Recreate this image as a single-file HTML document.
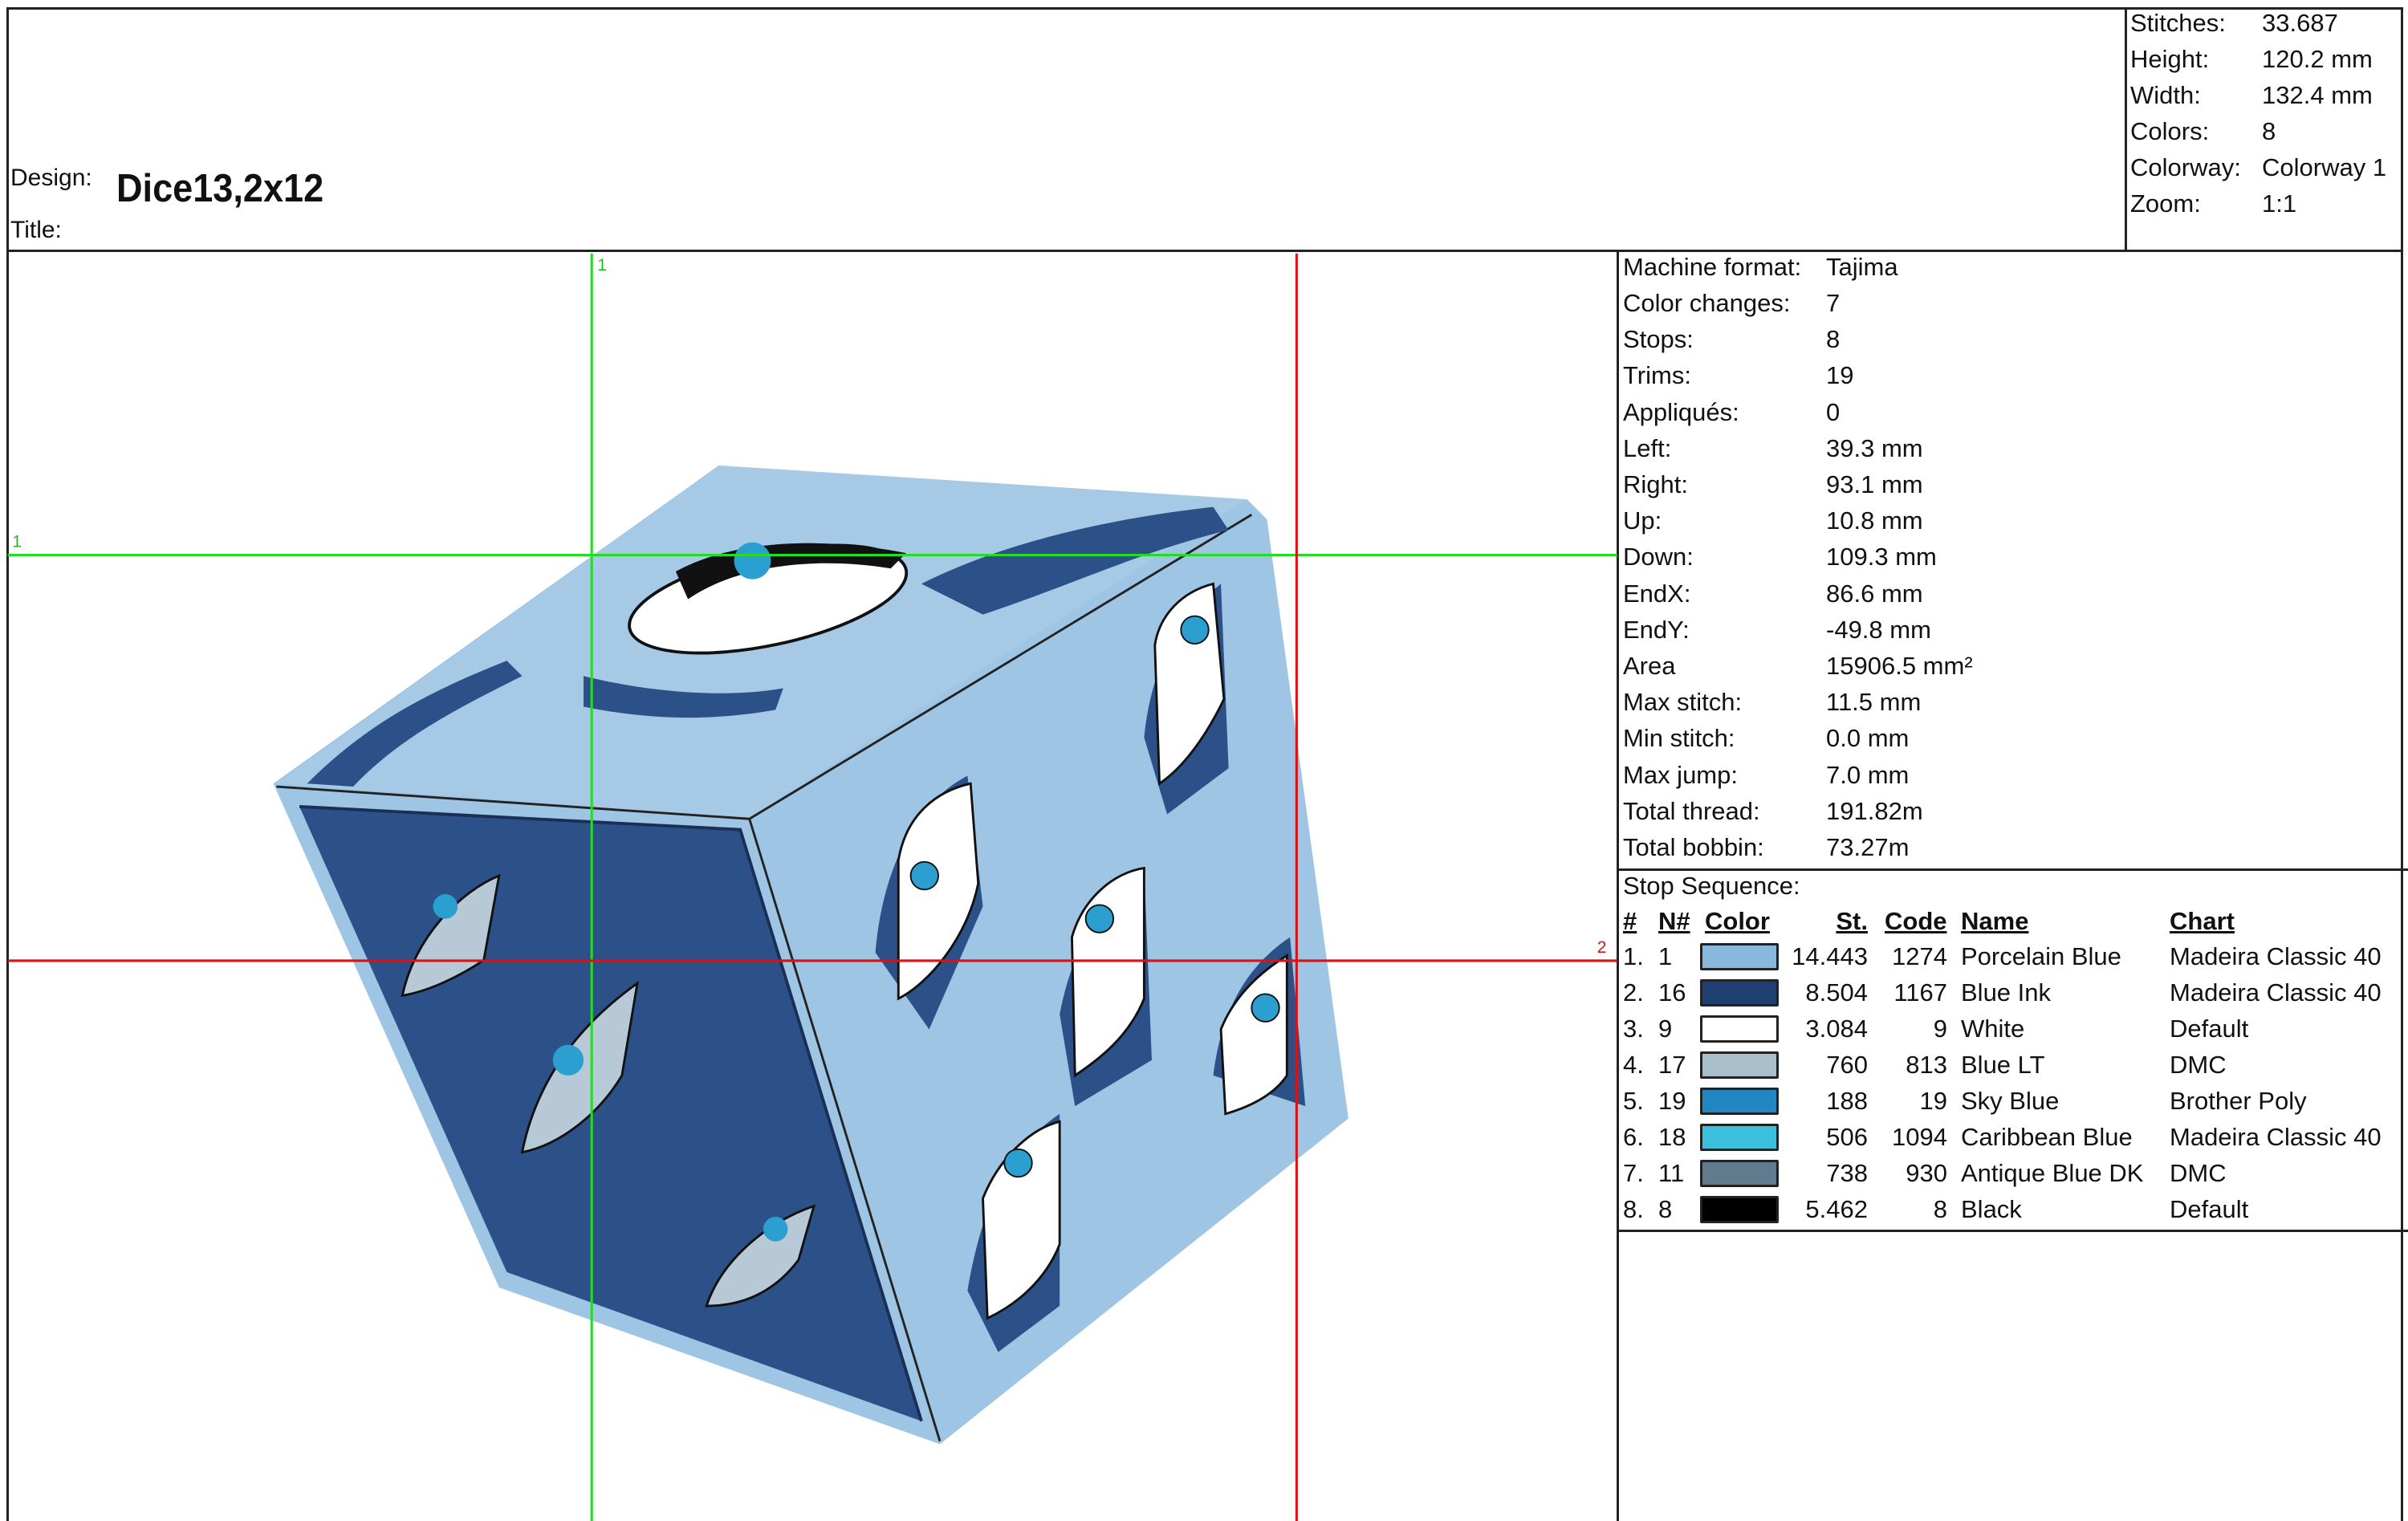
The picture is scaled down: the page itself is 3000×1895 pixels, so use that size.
<!DOCTYPE html>
<html><head><meta charset="utf-8"><style>
*{margin:0;padding:0;box-sizing:border-box}
body{width:3000px;height:1895px;background:#fff;position:relative;overflow:hidden;font-family:"Liberation Sans",sans-serif;color:#111}
.l{position:absolute;background:#222}
.t{position:absolute;font-size:31px;line-height:32px;white-space:nowrap}
.r{text-align:right}
.u{text-decoration:underline;font-weight:bold}
.sw{position:absolute;width:98px;height:34px;border:3px solid #222;border-radius:2px}
</style></head><body>
<div class="l" style="left:8px;top:9px;width:2986px;height:3px"></div>
<div class="l" style="left:8px;top:9px;width:3px;height:1886px"></div>
<div class="l" style="left:2991px;top:9px;width:3px;height:1886px"></div>
<div class="l" style="left:8px;top:311px;width:2986px;height:3px"></div>
<div class="l" style="left:2647px;top:9px;width:3px;height:304px"></div>
<div class="l" style="left:2014px;top:311px;width:3px;height:1584px"></div>
<div class="l" style="left:2014px;top:1082px;width:2980px;height:3px"></div>
<div class="l" style="left:2014px;top:1532px;width:2980px;height:3px"></div>

<div class="t" style="left:13px;top:206px;font-size:30px">Design:</div>
<div class="t" style="left:145px;top:210px;font-size:49px;line-height:50px;font-weight:bold;transform:scaleX(0.92);transform-origin:left">Dice13,2x12</div>
<div class="t" style="left:13px;top:271px;font-size:30px">Title:</div>

<div class="t" style="left:2654px;top:13px">Stitches:</div><div class="t" style="left:2818px;top:13px">33.687</div>
<div class="t" style="left:2654px;top:58px">Height:</div><div class="t" style="left:2818px;top:58px">120.2 mm</div>
<div class="t" style="left:2654px;top:103px">Width:</div><div class="t" style="left:2818px;top:103px">132.4 mm</div>
<div class="t" style="left:2654px;top:148px">Colors:</div><div class="t" style="left:2818px;top:148px">8</div>
<div class="t" style="left:2654px;top:193px">Colorway:</div><div class="t" style="left:2818px;top:193px">Colorway 1</div>
<div class="t" style="left:2654px;top:238px">Zoom:</div><div class="t" style="left:2818px;top:238px">1:1</div>

<div class="t" style="left:2022px;top:317px">Machine format:</div><div class="t" style="left:2275px;top:317px">Tajima</div>
<div class="t" style="left:2022px;top:362px">Color changes:</div><div class="t" style="left:2275px;top:362px">7</div>
<div class="t" style="left:2022px;top:407px">Stops:</div><div class="t" style="left:2275px;top:407px">8</div>
<div class="t" style="left:2022px;top:452px">Trims:</div><div class="t" style="left:2275px;top:452px">19</div>
<div class="t" style="left:2022px;top:498px">Appliqués:</div><div class="t" style="left:2275px;top:498px">0</div>
<div class="t" style="left:2022px;top:543px">Left:</div><div class="t" style="left:2275px;top:543px">39.3 mm</div>
<div class="t" style="left:2022px;top:588px">Right:</div><div class="t" style="left:2275px;top:588px">93.1 mm</div>
<div class="t" style="left:2022px;top:633px">Up:</div><div class="t" style="left:2275px;top:633px">10.8 mm</div>
<div class="t" style="left:2022px;top:678px">Down:</div><div class="t" style="left:2275px;top:678px">109.3 mm</div>
<div class="t" style="left:2022px;top:724px">EndX:</div><div class="t" style="left:2275px;top:724px">86.6 mm</div>
<div class="t" style="left:2022px;top:769px">EndY:</div><div class="t" style="left:2275px;top:769px">-49.8 mm</div>
<div class="t" style="left:2022px;top:814px">Area</div><div class="t" style="left:2275px;top:814px">15906.5 mm²</div>
<div class="t" style="left:2022px;top:859px">Max stitch:</div><div class="t" style="left:2275px;top:859px">11.5 mm</div>
<div class="t" style="left:2022px;top:904px">Min stitch:</div><div class="t" style="left:2275px;top:904px">0.0 mm</div>
<div class="t" style="left:2022px;top:950px">Max jump:</div><div class="t" style="left:2275px;top:950px">7.0 mm</div>
<div class="t" style="left:2022px;top:995px">Total thread:</div><div class="t" style="left:2275px;top:995px">191.82m</div>
<div class="t" style="left:2022px;top:1040px">Total bobbin:</div><div class="t" style="left:2275px;top:1040px">73.27m</div>

<div class="t" style="left:2022px;top:1088px">Stop Sequence:</div>
<div class="t u" style="left:2022px;top:1132px">#</div>
<div class="t u" style="left:2066px;top:1132px">N#</div>
<div class="t u" style="left:2124px;top:1132px">Color</div>
<div class="t u r" style="left:2227px;width:100px;top:1132px">St.</div>
<div class="t u" style="left:2348px;top:1132px">Code</div>
<div class="t u" style="left:2443px;top:1132px">Name</div>
<div class="t u" style="left:2703px;top:1132px">Chart</div>

<div id="rows"></div>
<script>
var d=[["1.","1","#88b8dc","14.443","1274","Porcelain Blue","Madeira Classic 40"],
["2.","16","#1f3f72","8.504","1167","Blue Ink","Madeira Classic 40"],
["3.","9","#ffffff","3.084","9","White","Default"],
["4.","17","#a9bfcc","760","813","Blue LT","DMC"],
["5.","19","#2286c4","188","19","Sky Blue","Brother Poly"],
["6.","18","#3cbfdc","506","1094","Caribbean Blue","Madeira Classic 40"],
["7.","11","#627a8e","738","930","Antique Blue DK","DMC"],
["8.","8","#000000","5.462","8","Black","Default"]];
var h="";
d.forEach(function(r,i){var y=1176+45*i;
h+='<div class="t" style="left:2022px;top:'+y+'px">'+r[0]+'</div>';
h+='<div class="t" style="left:2066px;top:'+y+'px">'+r[1]+'</div>';
h+='<div class="sw" style="left:2118px;top:'+(y-1)+'px;background:'+r[2]+'"></div>';
h+='<div class="t r" style="left:2177px;width:150px;top:'+y+'px">'+r[3]+'</div>';
h+='<div class="t r" style="left:2326px;width:100px;top:'+y+'px">'+r[4]+'</div>';
h+='<div class="t" style="left:2443px;top:'+y+'px">'+r[5]+'</div>';
h+='<div class="t" style="left:2703px;top:'+y+'px">'+r[6]+'</div>';});
document.getElementById("rows").innerHTML=h;
</script>

<svg style="position:absolute;left:0;top:0" width="3000" height="1895" viewBox="0 0 1568 990" preserveAspectRatio="none">
<polygon points="178,510 468,303 812,325 825,338 878,728 612,940 325,838" fill="#9fc5e4"/>
<polygon points="195,525 482,540 600,925 330,828" fill="#2c5088"/>
<polygon points="468,303 812,325 488,532 180,510" fill="#a6c9e6"/>
<path d="M180,512 L488,533 L815,335 M488,533 L612,938" stroke="#222" stroke-width="1.5" fill="none"/>
<path d="M195,525 L482,540 L600,925" stroke="#1a2f55" stroke-width="2" fill="none"/>
<path d="M200,510 C240,470 280,450 330,430 L340,440 C300,460 260,480 230,512 Z" fill="#2c5088"/>
<path d="M600,380 C640,360 700,340 790,330 L800,345 C740,360 700,380 640,400 Z" fill="#2c5088"/>
<path d="M380,440 C420,450 470,455 510,448 L505,462 C460,470 420,468 380,460 Z" fill="#2c5088"/>
<ellipse cx="500" cy="390" rx="92" ry="30" transform="rotate(-12 500 390)" fill="#fff" stroke="#111" stroke-width="2"/>
<path d="M440,372 C480,350 540,350 590,360 L580,370 C530,362 480,368 448,390 Z" fill="#111"/>
<circle cx="490" cy="365" r="12" fill="#2a9fd0"/>
<g fill="#2c5088">
<path d="M570,620 C575,560 600,520 630,505 L640,590 L605,670 Z"/>
<path d="M690,660 C700,610 720,585 745,565 L750,690 L700,720 Z"/>
<path d="M630,840 C640,780 660,745 690,725 L690,850 L650,880 Z"/>
<path d="M745,480 C750,430 770,400 795,380 L800,500 L760,530 Z"/>
<path d="M790,700 C795,660 810,630 840,610 L850,720 Z"/>
</g>
<g fill="#fff" stroke="#111" stroke-width="1.5">
<path d="M585,560 C590,530 610,515 632,510 L637,575 C630,610 605,640 585,650 Z"/>
<path d="M698,610 C705,585 725,568 745,565 L745,650 C735,675 715,690 700,700 Z"/>
<path d="M640,780 C650,755 670,735 690,730 L690,810 C680,835 660,850 643,858 Z"/>
<path d="M752,420 C755,400 770,385 790,380 L797,455 C785,480 770,500 755,510 Z"/>
<path d="M795,670 C805,645 825,630 838,622 L838,700 C830,712 815,720 798,725 Z"/>
</g>
<g fill="#2a9fd0" stroke="#111" stroke-width="1">
<circle cx="602" cy="570" r="9"/><circle cx="716" cy="598" r="9"/><circle cx="663" cy="757" r="9"/><circle cx="778" cy="410" r="9"/><circle cx="824" cy="656" r="9"/>
</g>
<g fill="#b7c8d6" stroke="#111" stroke-width="1.5">
<path d="M262,648 C270,610 300,580 325,570 L315,625 C300,635 280,645 262,648 Z"/>
<path d="M340,750 C350,700 380,665 415,640 L405,700 C390,725 365,745 340,750 Z"/>
<path d="M460,850 C470,820 500,795 530,785 L520,820 C505,840 485,850 460,850 Z"/>
</g>
<g fill="#2a9fd0"><circle cx="290" cy="590" r="8"/><circle cx="370" cy="690" r="10"/><circle cx="505" cy="800" r="8"/></g>
<line x1="385.3" y1="165" x2="385.3" y2="990" stroke="#22dd22" stroke-width="1.6"/>
<line x1="5" y1="361.3" x2="1053" y2="361.3" stroke="#22dd22" stroke-width="1.6"/>
<line x1="844.3" y1="165" x2="844.3" y2="990" stroke="#dd1111" stroke-width="1.6"/>
<line x1="5" y1="625.3" x2="1053" y2="625.3" stroke="#dd1111" stroke-width="1.6"/>
<text x="389" y="176" font-size="11" fill="#22bb22" font-family="Liberation Sans">1</text>
<text x="8" y="356" font-size="11" fill="#22bb22" font-family="Liberation Sans">1</text>
<text x="1040" y="620" font-size="11" fill="#dd1111" font-family="Liberation Sans">2</text>
</svg>
</body></html>
